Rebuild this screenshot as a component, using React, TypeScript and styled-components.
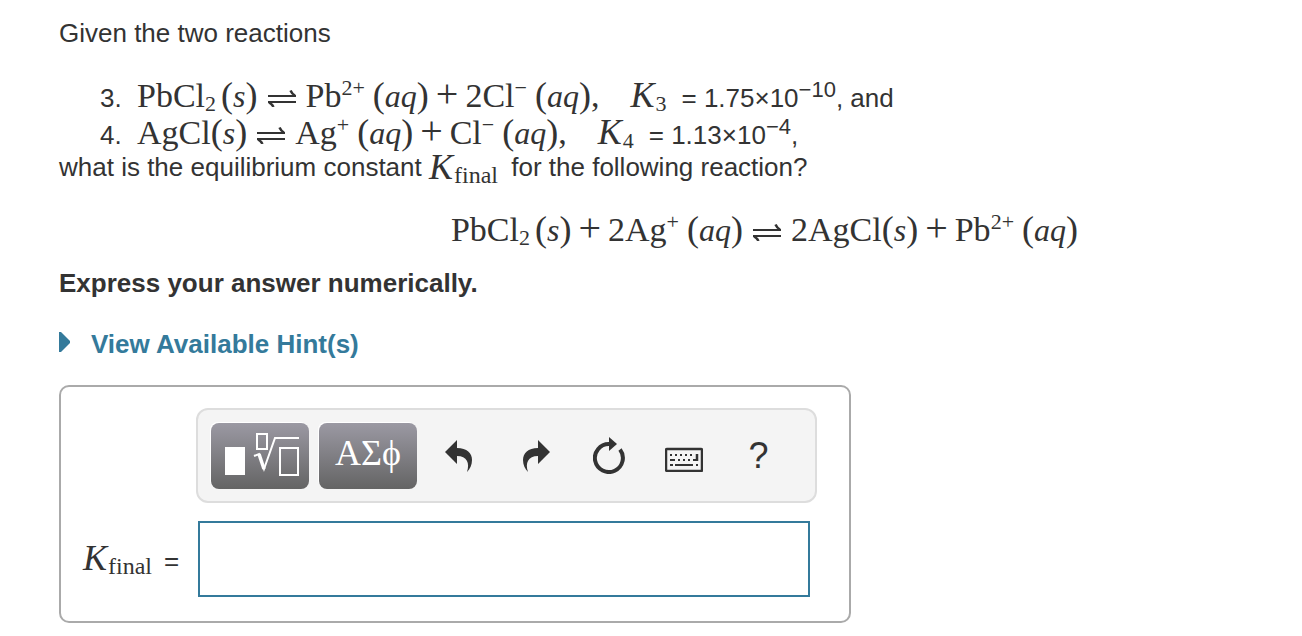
import React from "react";
import styled, { createGlobalStyle } from "styled-components";

const SANS = '"Liberation Sans", Arial, Helvetica, sans-serif';
const SERIF = '"Liberation Serif", "Times New Roman", serif';

const GlobalStyle = createGlobalStyle`
  *, *::before, *::after { box-sizing: border-box; }
  body {
    margin: 0;
    background: #ffffff;
    color: #333333;
    font: 26px/30px ${SANS};
  }
`;

const Page = styled.main`
  padding: 18px 0 12px 59px;
`;

const Paragraph = styled.p`
  margin: 0;
  white-space: nowrap;
`;

const ReactionList = styled.ol`
  margin: 29px 0 1px;
  padding: 0 0 0 41px;
  list-style: none;
`;

const ReactionItem = styled.li`
  display: flex;
  align-items: baseline;
  height: 37px;
  line-height: 37px;
  white-space: nowrap;
`;

const ItemNumber = styled.span`
  width: 37px;
`;

const Formula = styled.span`
  font-family: ${SERIF};
  font-size: 34px;
  white-space: nowrap;
`;

const Subscript = styled.span<{ $size?: number }>`
  display: inline-block;
  position: relative;
  top: 4px;
  margin-right: 2px;
  font-size: ${(p) => p.$size ?? 22}px;
  line-height: 0;
`;

const Superscript = styled.span`
  display: inline-block;
  position: relative;
  top: -12px;
  margin-right: 5px;
  font-size: 22px;
  line-height: 0;
`;

const StateBox = styled.span<{ $tight?: boolean }>`
  margin-left: ${(p) => (p.$tight ? 0 : 3)}px;
  font-size: 36px;

  i {
    font-size: 32px;
  }
`;

const Operator = styled.span`
  margin: 0 7px;
  font-size: 40px;
  line-height: 0;
`;

const ArrowSvg = styled.svg`
  width: 30px;
  height: 17px;
  margin: 0 9px;
  fill: none;
  stroke: currentColor;
  stroke-width: 2;
`;

const Variable = styled.i<{ $gap?: boolean }>`
  margin-left: ${(p) => (p.$gap ? 31 : 0)}px;
  margin-right: 1px;
  font-size: 36px;
`;

const Value = styled.span`
  margin-left: 13px;
`;

const Power = styled.span`
  display: inline-block;
  position: relative;
  top: -10px;
  font-size: 22px;
  line-height: 0;
`;

const InlineMath = styled.span`
  display: inline-block;
  height: 30px;
  margin-right: 4px;
  line-height: 30px;
  vertical-align: top;
`;

const Equation = styled.div`
  display: flex;
  justify-content: center;
  height: 37px;
  margin: 29px 0 20px;
  padding-left: 168px;
  line-height: 37px;
`;

const Instruction = styled.p`
  margin: 0 0 31px;
  font-weight: 700;
`;

const HintButton = styled.button`
  display: flex;
  align-items: center;
  gap: 21px;
  margin: 0;
  padding: 0;
  border: 0;
  background: none;
  color: #347a9b;
  font: 700 26px/30px ${SANS};
  cursor: pointer;

  svg {
    margin-bottom: 4px;
  }
`;

const AnswerPanel = styled.form`
  max-width: 792px;
  margin: 26px 12px 0 0;
  padding: 21px 32px 24px 22px;
  border: 2px solid #aaaaaa;
  border-radius: 10px;
`;

const Toolbar = styled.div`
  display: flex;
  align-items: center;
  height: 95px;
  margin: 0 0 18px 113px;
  padding-left: 13px;
  border: 2px solid #dddddd;
  border-radius: 12px;
  background: #f4f4f4;
`;

const Palettes = styled.div`
  display: flex;
  gap: 10px;
  margin-right: 4px;
`;

const PaletteButton = styled.button`
  display: flex;
  align-items: center;
  justify-content: center;
  width: 98px;
  height: 66px;
  padding: 0 0 2px;
  border: 0;
  border-radius: 8px;
  background: linear-gradient(#9b99a3, #646464);
  box-shadow: -1px -1px 0 #ffffff;
  color: #ffffff;
  font: 36px/40px ${SERIF};
  cursor: pointer;
`;

const LetterPaletteButton = styled(PaletteButton)`
  padding-bottom: 6px;
`;

const IconButton = styled.button`
  display: flex;
  align-items: center;
  justify-content: center;
  width: 75px;
  height: 66px;
  padding: 0;
  border: 0;
  background: none;
  color: #333333;
  cursor: pointer;
`;

const HelpButton = styled(IconButton)`
  font: 36px/40px ${SANS};
`;

const AnswerRow = styled.div`
  display: flex;
  align-items: center;
  margin-right: 7px;
`;

const AnswerLabel = styled.label`
  flex: none;
  width: 115px;
  white-space: nowrap;
`;

const Equals = styled.span`
  margin-left: 10px;
`;

const AnswerInput = styled.input`
  flex: 1;
  min-width: 0;
  height: 76px;
  padding: 0 12px;
  border: 2px solid #347a9b;
  border-radius: 0;
  background: #ffffff;
  color: #333333;
  font: 26px/30px ${SANS};
  outline: none;
`;

const Equilibrium = () => (
  <ArrowSvg viewBox="0 0 30 17" role="img" aria-label="in equilibrium with">
    <path d="M1 6H29M29 12H1" />
    <path d="M28 5.500Q25 4 23.500 0.500M2 12.500Q5 14 6.500 17" strokeWidth="2.500" />
  </ArrowSvg>
);

const State = ({ of, tight }: { of: string; tight?: boolean }) => (
  <StateBox $tight={tight}>
    (<i>{of}</i>)
  </StateBox>
);

const KFinal = () => (
  <Formula>
    <Variable>K</Variable>
    <Subscript $size={24}>final</Subscript>
  </Formula>
);

export default function App() {
  return (
    <>
      <GlobalStyle />
      <Page>
        <Paragraph>Given the two reactions</Paragraph>
        <ReactionList start={3}>
          <ReactionItem>
            <ItemNumber>3.</ItemNumber>
            <Formula>
              PbCl
              <Subscript>2</Subscript>
              <State of="s" />
              <Equilibrium />
              Pb
              <Superscript>2+</Superscript>
              <State of="aq" />
              <Operator>+</Operator>
              2Cl
              <Superscript>−</Superscript>
              <State of="aq" />,
              <Variable $gap>K</Variable>
              <Subscript>3</Subscript>
            </Formula>
            <Value>
              = 1.75×10<Power>−10</Power>, and
            </Value>
          </ReactionItem>
          <ReactionItem>
            <ItemNumber>4.</ItemNumber>
            <Formula>
              AgCl
              <State of="s" tight />
              <Equilibrium />
              Ag
              <Superscript>+</Superscript>
              <State of="aq" />
              <Operator>+</Operator>
              Cl
              <Superscript>−</Superscript>
              <State of="aq" />,
              <Variable $gap>K</Variable>
              <Subscript>4</Subscript>
            </Formula>
            <Value>
              = 1.13×10<Power>−4</Power>,
            </Value>
          </ReactionItem>
        </ReactionList>
        <Paragraph>
          what is the equilibrium constant{" "}
          <InlineMath>
            <KFinal />
          </InlineMath>{" "}
          for the following reaction?
        </Paragraph>
        <Equation>
          <Formula>
            PbCl
            <Subscript>2</Subscript>
            <State of="s" />
            <Operator>+</Operator>
            2Ag
            <Superscript>+</Superscript>
            <State of="aq" />
            <Equilibrium />
            2AgCl
            <State of="s" tight />
            <Operator>+</Operator>
            Pb
            <Superscript>2+</Superscript>
            <State of="aq" />
          </Formula>
        </Equation>
        <Instruction>Express your answer numerically.</Instruction>
        <HintButton type="button">
          <svg width="11" height="20" viewBox="0 0 11 20" fill="currentColor" aria-hidden="true">
            <path d="M0 0H2L11 9V11L2 20H0Z" />
          </svg>
          View Available Hint(s)
        </HintButton>
        <AnswerPanel onSubmit={(e) => e.preventDefault()}>
          <Toolbar role="toolbar" aria-label="Equation editor">
            <Palettes>
              <PaletteButton type="button" aria-label="Templates">
                <svg width="78" height="46" viewBox="0 0 78 46" fill="none" stroke="#fff" strokeWidth="2" aria-hidden="true">
                  <path d="M4 15H24V43H4Z" fill="#fff" stroke="none" />
                  <path d="M36 2H46V17H36Z" />
                  <path d="M59 16H77V43H59Z" />
                  <path d="M33 24L38 22L43 37L54 6H78" />
                  <path d="M38 22L43 37" strokeWidth="3.500" />
                </svg>
              </PaletteButton>
              <LetterPaletteButton type="button" aria-label="Greek letters">
                ΑΣϕ
              </LetterPaletteButton>
            </Palettes>
            <IconButton type="button" aria-label="Undo">
              <svg width="28" height="32" viewBox="0 0 28 32" fill="currentColor" aria-hidden="true">
                <path d="M0 12L12 0V8C22 8 27 13 27 20C27 25 25 29 22 32C25 23 22 16 12 16V24Z" />
              </svg>
            </IconButton>
            <IconButton type="button" aria-label="Redo">
              <svg width="32" height="32" viewBox="-4 0 32 32" fill="currentColor" aria-hidden="true">
                <path d="M28 12L16 0V8C6 8 1 13 1 20C1 25 3 29 6 32C3 23 6 16 16 16V24Z" />
              </svg>
            </IconButton>
            <IconButton type="button" aria-label="Reset">
              <svg width="32" height="37" viewBox="0 0 32 37" fill="none" stroke="currentColor" strokeWidth="4" aria-hidden="true">
                <path d="M27 12.500A14 14 0 1 1 16 7" />
                <path d="M16 0L24 7L16 14Z" fill="currentColor" stroke="none" />
              </svg>
            </IconButton>
            <IconButton type="button" aria-label="Keyboard shortcuts">
              <svg width="38" height="32" viewBox="0 0 38 32" fill="none" stroke="currentColor" strokeWidth="2" aria-hidden="true">
                <rect x="1" y="9" width="36" height="22" rx="1" strokeWidth="2.500" />
                <path d="M5 15H7M10 15H12M15 15H17M20 15H22M25 15H27" />
                <path d="M5 20H10M13 20H15M18 20H20M23 20H25M28 20H33" />
                <path d="M32 14V21" strokeWidth="2.500" />
                <path d="M5 25H8M10 25H28M31 25H33" />
              </svg>
            </IconButton>
            <HelpButton type="button" aria-label="Help">
              ?
            </HelpButton>
          </Toolbar>
          <AnswerRow>
            <AnswerLabel htmlFor="k-final">
              <KFinal />
              <Equals>=</Equals>
            </AnswerLabel>
            <AnswerInput id="k-final" type="text" autoComplete="off" />
          </AnswerRow>
        </AnswerPanel>
      </Page>
    </>
  );
}
